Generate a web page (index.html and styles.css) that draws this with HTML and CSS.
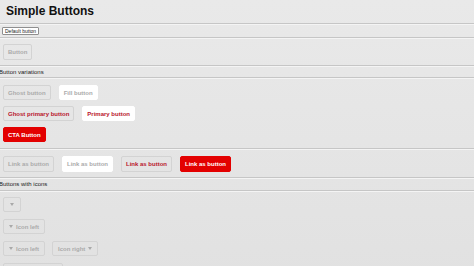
FILE: index.html
```html
<!DOCTYPE html>
<html lang="en">
<head>
    <meta charset="UTF-8">
    <meta name="viewport" content="width=device-width, initial-scale=1.0">
    <title>Simple Buttons</title>
    <link rel="stylesheet" href="styles.css">
</head>
<body>
    <h1 class="title">Simple Buttons</h1>
    <hr class="rule">
    <div class="plain">
        <button class="default-btn">Default button</button>
    </div>
    <hr class="rule">
    <div class="section first">
        <div class="row">
            <button class="btn ghost">Button</button>
        </div>
    </div>
    <hr class="rule">
    <div class="label">Button variations</div>
    <hr class="rule">
    <div class="section">
        <div class="row">
            <button class="btn ghost">Ghost button</button>
            <button class="btn fill">Fill button</button>
        </div>
        <div class="row">
            <button class="btn ghost red-text">Ghost primary button</button>
            <button class="btn fill red-text">Primary button</button>
        </div>
        <div class="row">
            <button class="btn cta">CTA Button</button>
        </div>
    </div>
    <hr class="rule">
    <div class="section links">
        <div class="row">
            <a class="btn ghost" href="#">Link as button</a>
            <a class="btn fill" href="#">Link as button</a>
            <a class="btn ghost red-text" href="#">Link as button</a>
            <a class="btn cta" href="#">Link as button</a>
        </div>
    </div>
    <hr class="rule">
    <div class="label label-icons">Buttons with icons</div>
    <hr class="rule">
    <div class="section icons">
        <div class="row">
            <button class="btn ghost icon-only"><svg class="caret" viewBox="0 0 4 3"><path d="M0 0h4L2 3z"/></svg></button>
        </div>
        <div class="row">
            <button class="btn ghost"><svg class="caret" viewBox="0 0 4 3"><path d="M0 0h4L2 3z"/></svg> Icon left</button>
        </div>
        <div class="row">
            <button class="btn ghost"><svg class="caret" viewBox="0 0 4 3"><path d="M0 0h4L2 3z"/></svg> Icon left</button>
            <button class="btn ghost">Icon right <svg class="caret" viewBox="0 0 4 3"><path d="M0 0h4L2 3z"/></svg></button>
        </div>
        <div class="row">
            <button class="btn ghost wide"><svg class="caret" viewBox="0 0 4 3"><path d="M0 0h4L2 3z"/></svg> Icon both <svg class="caret" viewBox="0 0 4 3"><path d="M0 0h4L2 3z"/></svg></button>
        </div>
    </div>
</body>
</html>
```

FILE: styles.css
```css
body {
    margin: 0;
    font-family: "Liberation Sans", Arial, sans-serif;
    color: #222;
    background: linear-gradient(#e9e9e9, #e1e1e1);
    min-height: 100vh;
    overflow: hidden;
}
.title {
    margin: 0;
    padding: 4px 6px;
    font-size: 12px;
    line-height: 15px;
    font-weight: bold;
    color: #111;
}
.rule {
    margin: 0;
    height: 0;
    border: none;
    border-top: 1px solid #c6c6c6;
    border-bottom: 1px solid #f4f4f4;
}
.plain {
    padding: 2px 2px;
    height: 8px;
}
.default-btn {
    display: block;
    height: 8px;
    padding: 0 2px;
    font-family: "Liberation Sans", Arial, sans-serif;
    font-size: 5px;
    line-height: 6px;
    color: #222;
    background: #fff;
    border: 1px solid #8f8f8f;
    border-radius: 1px;
}
.label {
    height: 10px;
    font-size: 6px;
    line-height: 10px;
    margin-left: -1px;
}
.label-icons {
    height: 11px;
    line-height: 10px;
}
.section {
    display: flex;
    flex-direction: column;
    gap: 6px;
    padding: 6px 3px;
}
.section.first {
    padding: 5px 3px;
}
.section.links {
    padding: 6px 3px 5px;
}
.section.icons {
    padding: 5px 3px;
    gap: 7px;
}
.row {
    display: flex;
    gap: 8px;
}
.icons .row {
    gap: 7px;
}
.btn {
    display: inline-flex;
    align-items: center;
    gap: 3px;
    box-sizing: border-box;
    height: 15px;
    padding: 0 4px;
    font-family: "Liberation Sans", Arial, sans-serif;
    font-size: 6px;
    font-weight: bold;
    color: #ababab;
    text-decoration: none;
    border: 1px solid #d3d3d3;
    border-radius: 2px;
    background: transparent;
    cursor: pointer;
}
.first .btn {
    height: 16px;
}
.links .btn {
    height: 16px;
}
.icons .btn {
    padding: 0 5px;
}
.fill {
    background: #fff;
    border-color: #fff;
}
.red-text {
    color: #b8142c;
}
.cta {
    background: #e30000;
    border-color: #e30000;
    color: #fff;
}
.icons .icon-only {
    width: 18px;
    justify-content: center;
    padding: 0;
}
.icons .wide {
    width: 60px;
    align-items: flex-end;
}
.caret {
    width: 4px;
    height: 3px;
    fill: #a9a9a9;
}
```
